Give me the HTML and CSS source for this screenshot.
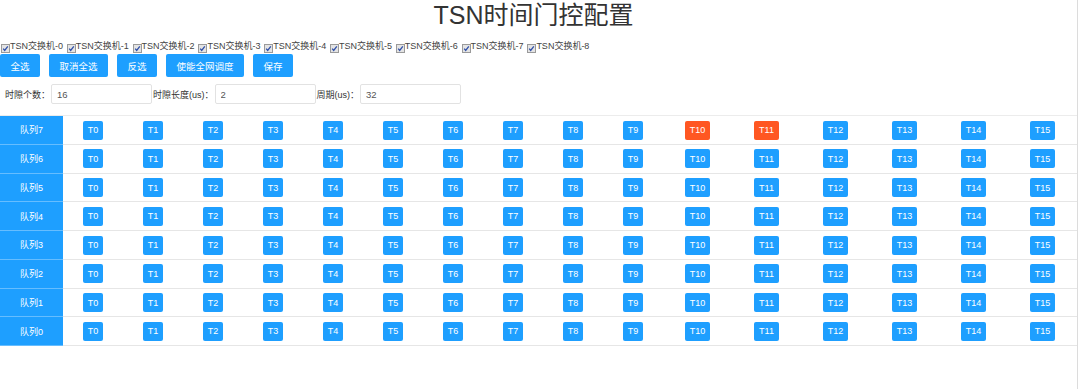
FILE: index.html
```html
<!DOCTYPE html>
<html lang="zh-CN">
<head>
    <meta charset="UTF-8">
    <meta name="viewport" content="width=device-width, initial-scale=1.0">
    <title>TSN时间门控配置</title>
    <link rel="stylesheet" href="styles.css">
</head>
<body>
    <div class="page">
        <h1 class="title">TSN时间门控配置</h1>

        <div class="switch-list" id="switchList"></div>

        <div class="btn-row">
            <button class="btn">全选</button>
            <button class="btn">取消全选</button>
            <button class="btn">反选</button>
            <button class="btn">使能全网调度</button>
            <button class="btn">保存</button>
        </div>

        <div class="param-row">
            <label class="param-label">时隙个数：</label>
            <input class="param-input" type="text" value="16">
            <label class="param-label">时隙长度(us)：</label>
            <input class="param-input" type="text" value="2">
            <label class="param-label">周期(us)：</label>
            <input class="param-input" type="text" value="32">
        </div>

        <table class="gate-table">
            <colgroup id="cols"></colgroup>
            <tbody id="gateRows"></tbody>
        </table>
    </div>

    <script>
        const slotCount = 16;
        const queueCount = 8;
        // 队列7 的 T10/T11 为关闭状态
        const closed = { 7: [10, 11] };

        const checkSvg = '<svg class="check" width="9" height="9" viewBox="0 0 9 9">' +
            '<rect x="0.5" y="0.5" width="8" height="8" fill="#e4e4e4" stroke="#9a9a9a"/>' +
            '<path d="M2.2 4.6 L3.7 6.4 L6.8 2.3" fill="none" stroke="#2f4fa8" stroke-width="1.3"/></svg>';

        const switchList = document.getElementById('switchList');
        for (let i = 0; i < 9; i++) {
            switchList.innerHTML += `<label class="switch-item">${checkSvg}TSN交换机-${i}</label>`;
        }

        const cols = document.getElementById('cols');
        cols.innerHTML = '<col class="col-queue">';
        for (let t = 0; t < slotCount; t++) {
            cols.innerHTML += `<col class="${t < 10 ? 'col-slot' : 'col-slot-wide'}">`;
        }

        const rows = document.getElementById('gateRows');
        for (let q = queueCount - 1; q >= 0; q--) {
            let html = `<td class="queue">队列${q}</td>`;
            for (let t = 0; t < slotCount; t++) {
                const off = (closed[q] || []).includes(t);
                html += `<td><button class="slot${off ? ' off' : ''}">T${t}</button></td>`;
            }
            const tr = document.createElement('tr');
            tr.innerHTML = html;
            rows.appendChild(tr);
        }
    </script>
</body>
</html>
```

FILE: styles.css
```css
body {
    margin: 0;
    font-family: "Liberation Sans", "Noto Sans CJK SC", sans-serif;
    color: #333;
    background-color: #fff;
}

.page {
    width: 1077px;
    min-height: 100vh;
    border-right: 1px solid #dcdcdc;
}

.title {
    margin: 0;
    padding-right: 10px;
    font-size: 25px;
    font-weight: normal;
    line-height: 30px;
    text-align: center;
    color: #333;
}

.switch-list {
    display: flex;
    margin-top: 10px;
    padding-left: 1px;
    height: 13px;
    line-height: 13px;
    font-size: 9px;
    color: #444;
}

.switch-item {
    display: flex;
    align-items: flex-end;
    width: 65.8px;
}

.check {
    flex: none;
}

.btn-row {
    display: flex;
    gap: 9px;
    margin-top: 1px;
}

.btn {
    height: 23px;
    padding: 0 10.5px;
    border: none;
    border-radius: 2px;
    background-color: #1e9fff;
    color: #fff;
    font-family: inherit;
    font-size: 9.5px;
    cursor: pointer;
}

.param-row {
    display: flex;
    align-items: center;
    margin-top: 7px;
    padding-left: 5px;
    height: 20px;
}

.param-label {
    font-size: 9px;
    color: #333;
    margin: 0 1px 0 1px;
    white-space: nowrap;
}

.param-row .param-label:first-child {
    margin-left: 0;
}

.param-input {
    box-sizing: border-box;
    width: 101px;
    height: 20px;
    padding: 0 5px;
    border: 1px solid #e2e2e2;
    border-radius: 2px;
    font-family: inherit;
    font-size: 9.5px;
    color: #555;
}

.gate-table {
    margin-top: 11px;
    width: 1077px;
    table-layout: fixed;
    border-collapse: collapse;
    border-top: 1px solid #ececec;
}

.col-queue {
    width: 63px;
}

.col-slot {
    width: 60px;
}

.col-slot-wide {
    width: 69px;
}

.gate-table td {
    height: 27.75px;
    padding: 0;
    text-align: center;
    border-bottom: 1px solid #e6e6e6;
}

.gate-table td.queue {
    background-color: #1e9fff;
    border-bottom-color: #66bdff;
    color: #fff;
    font-size: 9px;
}

.slot {
    height: 19px;
    padding: 0 5px;
    border: none;
    border-radius: 2px;
    background-color: #1e9fff;
    color: #fff;
    font-family: inherit;
    font-size: 9px;
    vertical-align: middle;
    cursor: pointer;
}

.slot.off {
    background-color: #ff5722;
}
```
